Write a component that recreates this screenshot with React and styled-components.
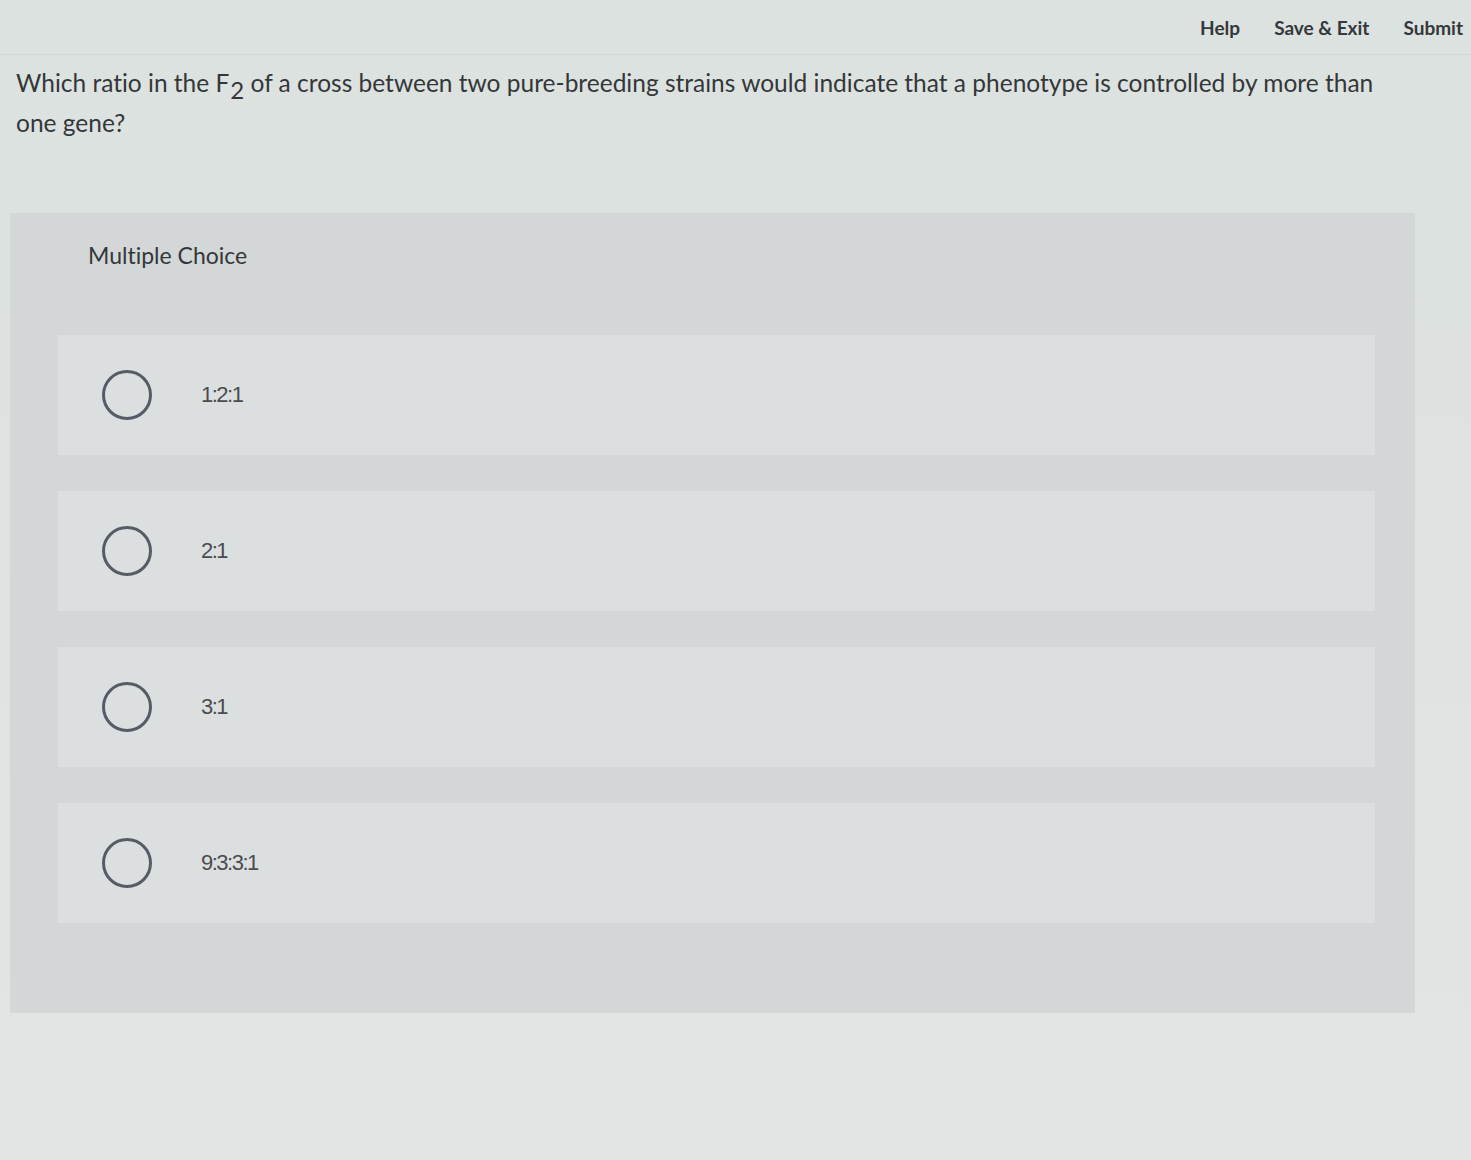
import React from "react";
import styled, { createGlobalStyle } from "styled-components";

const Global = createGlobalStyle`
  html, body { margin: 0; padding: 0; }
  body {
    background: #dfe3e1;
    font-family: "Open Sans", "Liberation Sans", sans-serif;
    color: #2f3336;
    font-variant-ligatures: none;
  }
`;

const Page = styled.div`
  width: 1471px;
  min-height: 1160px;
  display: flex;
  flex-direction: column;
  background: linear-gradient(180deg, #dce2df 0%, #dfe3e1 60%, #e3e5e4 100%);
`;

const Header = styled.header`
  height: 54px;
  display: flex;
  align-items: center;
  justify-content: flex-end;
  gap: 34px;
  padding: 0 8px 0 0;
  border-bottom: 1px solid #d3d8d5;
`;

const NavLink = styled.a`
  font-family: "Lato", "Open Sans", sans-serif;
  font-weight: 700;
  font-size: 19px;
  color: #34383c;
  text-decoration: none;
  cursor: pointer;
`;

const Question = styled.p`
  margin: 0;
  padding: 8px 60px 0 16px;
  font-family: "Lato", "Open Sans", sans-serif;
  font-size: 24.5px;
  line-height: 40px;
  color: #34373a;
`;

const Sub = styled.span`
  display: inline-block;
  font-size: 24px;
  line-height: 24px;
  vertical-align: -7px;
  margin-left: 1px;
`;

const Panel = styled.section`
  margin: 70px 56px 0 10px;
  background: #d3d7d7;
  padding: 0 0 90px 0;
  display: flex;
  flex-direction: column;
`;

const PanelTitle = styled.h2`
  margin: 0;
  padding: 0 0 0 78px;
  height: 84px;
  display: flex;
  align-items: center;
  font-family: "Lato", "Open Sans", sans-serif;
  font-weight: 400;
  font-size: 23px;
  color: #34383b;
`;

const Options = styled.div`
  display: flex;
  flex-direction: column;
  gap: 36px;
  padding: 38px 40px 0 48px;
`;

const Option = styled.label`
  height: 120px;
  display: flex;
  align-items: center;
  gap: 49px;
  padding-left: 44px;
  background: #dcdfe0;
  cursor: pointer;
`;

const Radio = styled.span`
  width: 44px;
  height: 44px;
  border-radius: 50%;
  border: 3px solid #565b66;
  background: transparent;
  flex-shrink: 0;
`;

const OptionText = styled.span`
  font-family: "Liberation Sans", Arial, sans-serif;
  font-size: 22px;
  letter-spacing: -1.5px;
  color: #4a4d50;
`;

const choices = ["1:2:1", "2:1", "3:1", "9:3:3:1"];

export default function App() {
  return (
    <>
      <Global />
      <Page>
        <Header>
          <NavLink>Help</NavLink>
          <NavLink>Save &amp; Exit</NavLink>
          <NavLink>Submit</NavLink>
        </Header>
        <Question>
          Which ratio in the F<Sub>2</Sub> of a cross between two pure-breeding strains would indicate that a phenotype is controlled by more than one gene?
        </Question>
        <Panel>
          <PanelTitle>Multiple Choice</PanelTitle>
          <Options>
            {choices.map((c) => (
              <Option key={c}>
                <Radio />
                <OptionText>{c}</OptionText>
              </Option>
            ))}
          </Options>
        </Panel>
      </Page>
    </>
  );
}
